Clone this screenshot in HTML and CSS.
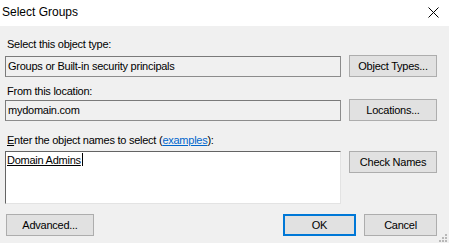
FILE: index.html
```html
<!DOCTYPE html>
<html>
<head>
<meta charset="utf-8">
<link rel="stylesheet" href="styles.css">
</head>
<body>
<div class="dialog">
  <div class="titlebar">
    <span class="title">Select Groups</span>
    <svg class="close" width="11" height="11" viewBox="0 0 11 11"><path d="M0.5 0.5 L10.5 10.5 M10.5 0.5 L0.5 10.5" stroke="#000" stroke-width="1" fill="none"/></svg>
  </div>
  <div class="content">
    <div class="label l1">Select this object type:</div>
    <div class="row r1">
      <div class="field">Groups or Built-in security principals</div>
      <div class="btn side">Object Types...</div>
    </div>
    <div class="label l2">From this location:</div>
    <div class="row r2">
      <div class="field">mydomain.com</div>
      <div class="btn side">Locations...</div>
    </div>
    <div class="label l3"><u>E</u>nter the object names to select (<span class="link">examples</span>):</div>
    <div class="row r3">
      <div class="area"><span class="name">Domain Admins</span><span class="caret"></span></div>
      <div class="btn side">Check Names</div>
    </div>
    <div class="footer">
      <div class="btn adv">Advanced...</div>
      <div class="actions">
        <div class="btn small ok">OK</div>
        <div class="btn small">Cancel</div>
      </div>
    </div>
  </div>
  <svg class="grip" width="8" height="8" viewBox="0 0 8 8">
    <rect x="6" y="0" width="2" height="2" fill="#b8b8b8"/>
    <rect x="3" y="3" width="2" height="2" fill="#b8b8b8"/>
    <rect x="6" y="3" width="2" height="2" fill="#b8b8b8"/>
    <rect x="0" y="6" width="2" height="2" fill="#b8b8b8"/>
    <rect x="3" y="6" width="2" height="2" fill="#b8b8b8"/>
    <rect x="6" y="6" width="2" height="2" fill="#b8b8b8"/>
  </svg>
</div>
</body>
</html>
```
FILE: styles.css
```css
* { box-sizing: border-box; }
html, body { margin: 0; padding: 0; }
body {
  width: 449px;
  height: 243px;
  overflow: hidden;
  background: #f0f0f0;
  font-family: "Liberation Sans", Arial, sans-serif;
  font-size: 11px;
  letter-spacing: -0.25px;
  color: #000;
}
.dialog {
  position: relative;
  width: 449px;
  height: 243px;
}
.titlebar {
  height: 26px;
  background: #fff;
  display: flex;
  align-items: center;
  justify-content: space-between;
  padding: 0 10px 0 2px;
}
.title {
  font-size: 12px;
  letter-spacing: 0;
  margin-top: -2px;
}
.close { margin-top: -1px; }
.content {
  padding: 0 12px 0 5px;
}
.label {
  line-height: 13px;
  padding-left: 2px;
}
.l1 { margin-top: 12px; }
.l2 { margin-top: 8px; }
.l3 { margin-top: 13px; }
.row {
  display: flex;
  align-items: flex-start;
  gap: 8px;
}
.r1 { margin-top: 4px; }
.r2 { margin-top: 1px; }
.r3 { margin-top: 4px; }
.field {
  flex: 1;
  height: 21px;
  margin-top: 1px;
  border: 1px solid #7a7a7a;
  border-right-color: #8c8c8c;
  border-bottom-color: #8c8c8c;
  background: #f0f0f0;
  line-height: 19px;
  padding-left: 2px;
}
.area {
  flex: 1;
  height: 53px;
  border-top: 1px solid #646464;
  border-left: 1px solid #646464;
  border-right: 1px solid #e3e3e3;
  border-bottom: 1px solid #e3e3e3;
  background: #fff;
  padding: 1px 0 0 1px;
  line-height: 14px;
}
.name {
  text-decoration: underline;
}
.caret {
  display: inline-block;
  width: 1px;
  height: 13px;
  background: #000;
  vertical-align: -2px;
  margin-left: 1px;
}
.btn {
  height: 22px;
  background: #e1e1e1;
  border: 1px solid #adadad;
  display: flex;
  align-items: center;
  justify-content: center;
  line-height: 13px;
}
.side { width: 88px; }
.footer {
  margin-top: 10px;
  display: flex;
  justify-content: space-between;
}
.adv { width: 88px; margin-left: 1px; }
.actions {
  display: flex;
  gap: 8px;
}
.small { width: 73px; }
.ok {
  border: 2px solid #0078d7;
}
.link {
  color: #0066cc;
  text-decoration: underline;
}
.grip {
  position: absolute;
  right: 2px;
  bottom: 1px;
}
```
